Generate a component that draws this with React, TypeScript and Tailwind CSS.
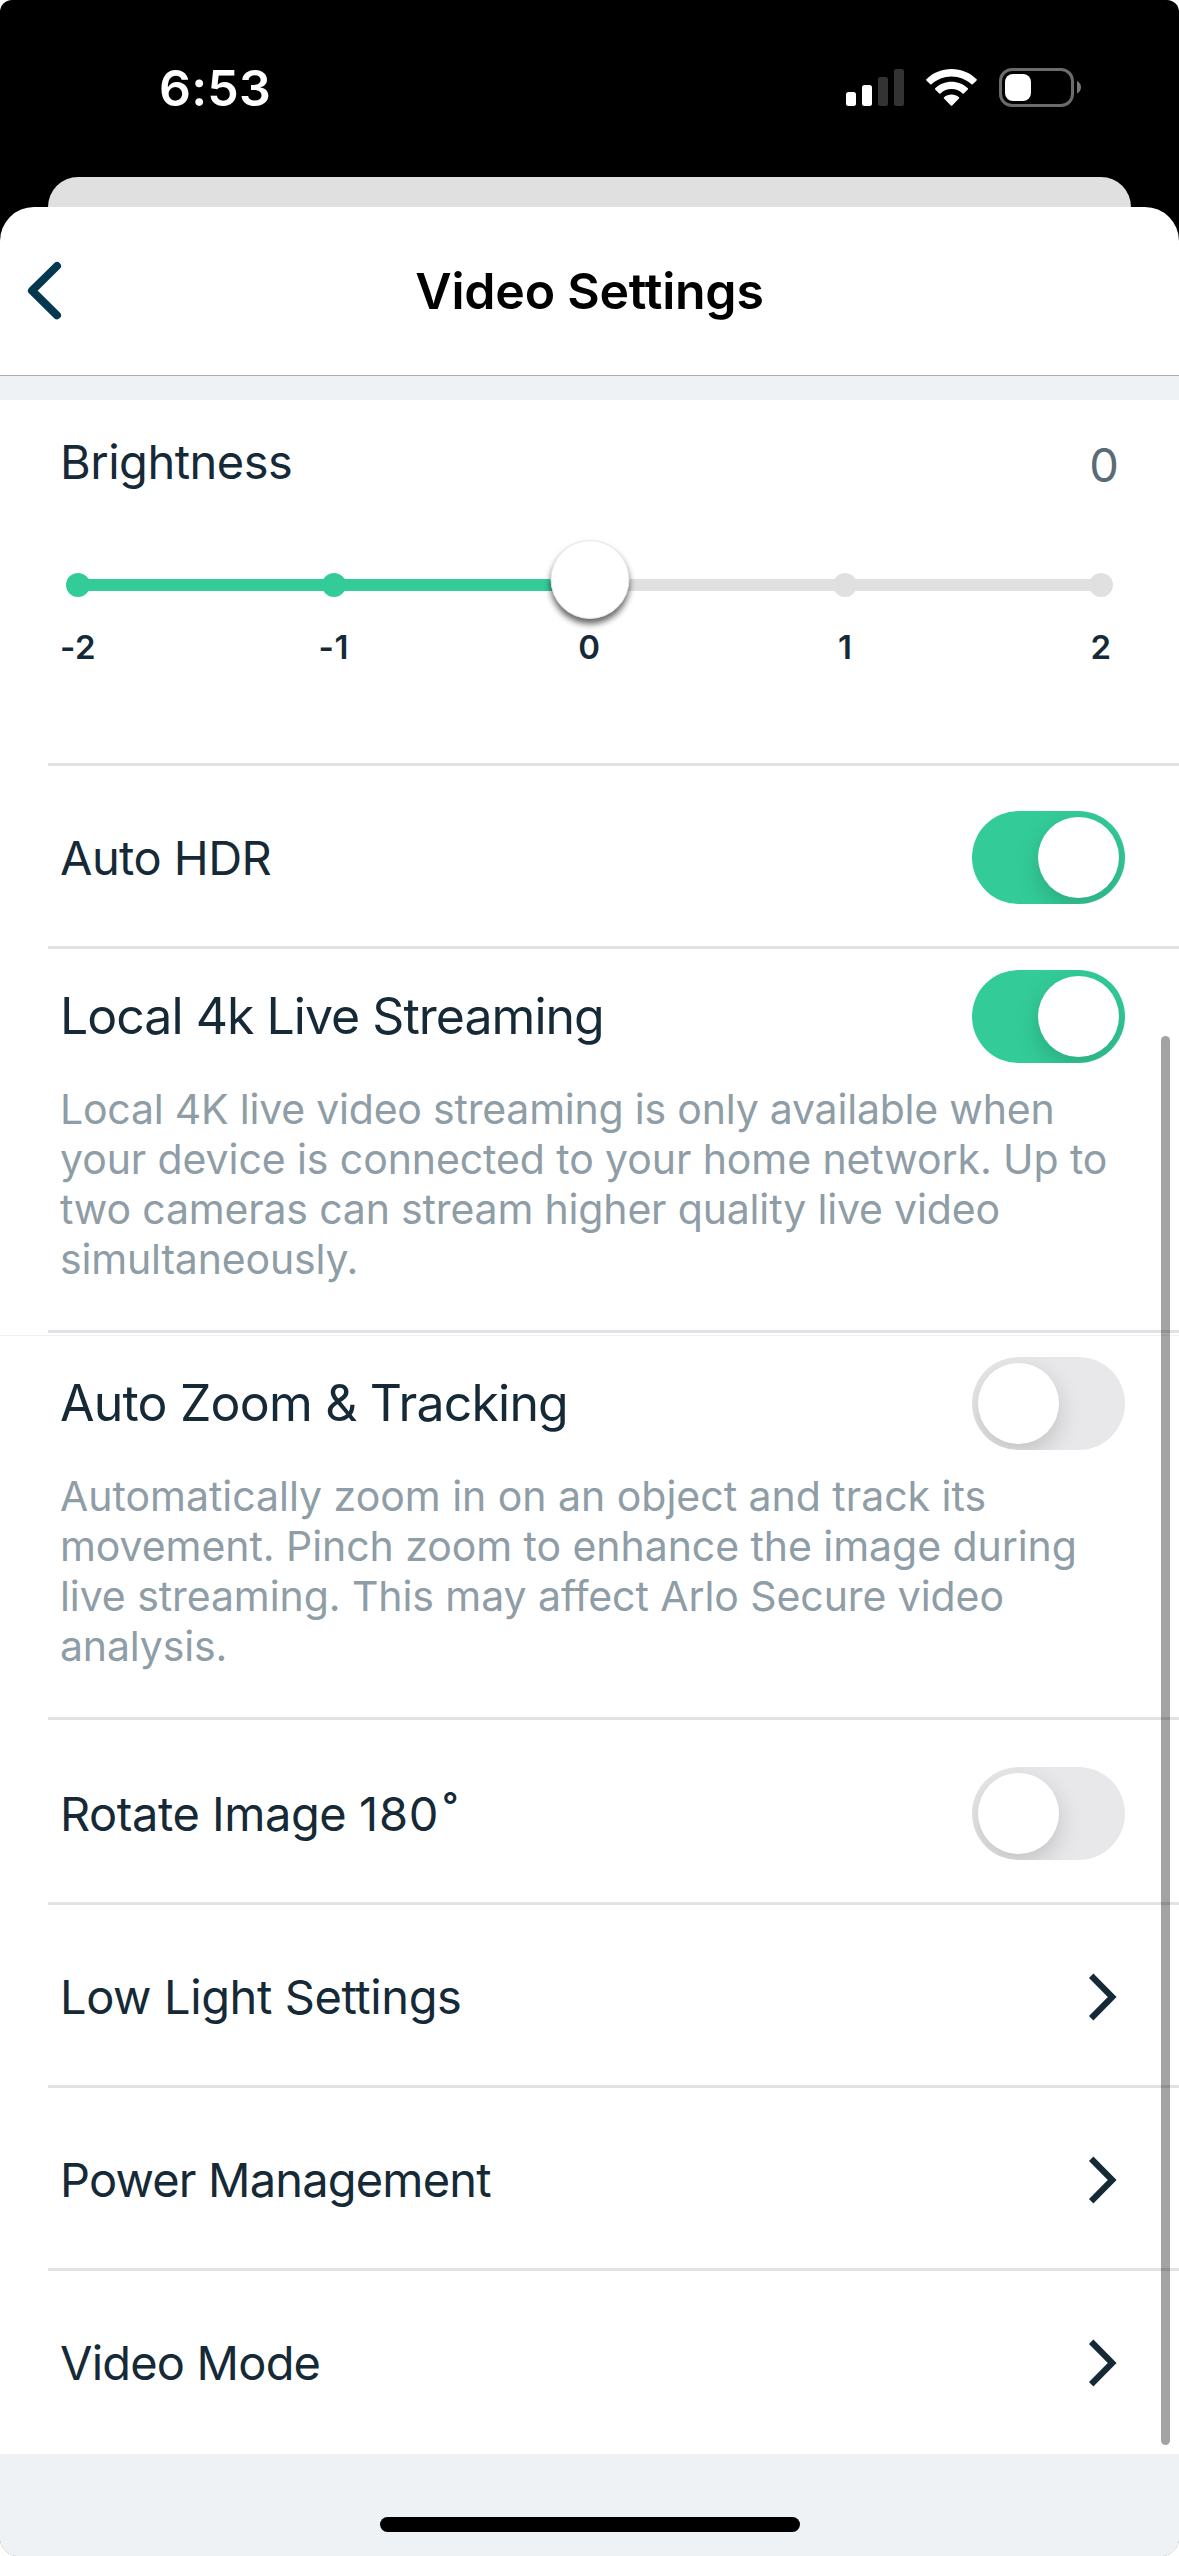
import type { ReactNode } from "react";

function StatusBar() {
  return (
    <div className="flex h-[177px] items-center justify-between pr-[98px] pb-px pl-[159px]">
      <span className="text-[50px] leading-[60px] font-semibold tracking-[0.2px] text-white">6:53</span>
      <div className="flex items-center">
        <svg width="58" height="40" viewBox="0 0 58 40" className="mr-[22px]">
          <rect x="0" y="24" width="10" height="14" rx="2.5" fill="#fff" />
          <rect x="16" y="17" width="10" height="21" rx="2.5" fill="#fff" />
          <rect x="32" y="9" width="10" height="29" rx="2.5" fill="#333" />
          <rect x="48" y="1" width="10" height="37" rx="2.5" fill="#333" />
        </svg>
        <svg width="51" height="40" viewBox="0 0 51 40" className="mr-[22px]" fill="#fff">
          <path d="M25.500 1C35 1 44 4.700 50.600 11.200Q51.200 11.800 50.600 12.400L46.700 16.300Q46.100 16.900 45.500 16.300C40 11.200 33 8.400 25.500 8.400S11 11.200 5.500 16.300Q4.900 16.900 4.300 16.300L.4 12.400Q-.2 11.800 .4 11.200C7 4.700 16 1 25.500 1Z" />
          <path d="M25.500 13.700C31.600 13.700 37.400 16 41.800 20.200Q42.400 20.800 41.800 21.400L37.800 25.400Q37.200 26 36.600 25.400C33.500 22.600 29.600 21.100 25.500 21.100S17.500 22.600 14.400 25.400Q13.800 26 13.200 25.400L9.200 21.400Q8.600 20.800 9.200 20.200C13.600 16 19.400 13.700 25.500 13.700Z" />
          <path d="M25.500 26.500C28.200 26.500 30.900 27.400 33 29.200Q33.600 29.800 33 30.400L26.200 37.400Q25.500 38.100 24.800 37.400L18 30.400Q17.400 29.800 18 29.200C20.100 27.400 22.800 26.500 25.500 26.500Z" />
        </svg>
        <svg width="82" height="40" viewBox="0 0 82 40">
          <rect x="1.500" y="1.500" width="72" height="36" rx="11.500" fill="none" stroke="#6b6b6b" strokeWidth="3" />
          <rect x="6" y="6" width="26" height="27" rx="8" fill="#fff" />
          <path d="M78 13C80.500 14 82 16.500 82 19.300S80.500 24.500 78 25.500Z" fill="#777" />
        </svg>
      </div>
    </div>
  );
}

function NavBar() {
  return (
    <header className="grid h-[169px] grid-cols-[1fr_auto_1fr] items-center border-b border-[#a9acaf]">
      <svg width="38" height="60" viewBox="0 0 38 60" className="ml-[25px]">
        <path d="M32 5L7 29.700L32 54.300" fill="none" stroke="#04384f" strokeWidth="8" strokeLinecap="round" strokeLinejoin="round" />
      </svg>
      <h1 className="text-[50px] leading-[60px] font-semibold tracking-[-0.23px] whitespace-nowrap text-black">
        Video Settings
      </h1>
    </header>
  );
}

function Toggle({ on }: { on: boolean }) {
  return (
    <div
      className={
        on
          ? "flex h-[93px] w-[153px] shrink-0 items-center justify-end overflow-hidden rounded-full bg-[#33cc99] px-[6px]"
          : "flex h-[93px] w-[153px] shrink-0 items-center overflow-hidden rounded-full bg-[#e8e8ea] px-[6px]"
      }
    >
      <div className="size-[81px] rounded-full bg-white shadow-[0_9px_24px_rgba(0,0,0,0.17)]" />
    </div>
  );
}

const stops = ["-2", "-1", "0", "1", "2"];

function Brightness() {
  return (
    <section className="h-[363px] bg-white">
      <div className="flex justify-between pt-[32px] pr-[60px] pl-[60px] text-[47px] leading-[60px]">
        <span className="tracking-[-0.5px] text-[#152a36]">Brightness</span>
        <span className="translate-y-[3px] text-[#5a6b78]">0</span>
      </div>
      <div className="relative mx-[66px] mt-[48px] h-[79px]">
        <div className="absolute inset-x-[12px] top-[39px] flex h-[12px] bg-[#e0e0e0]">
          <div className="w-1/2 bg-[#33cc99]" />
        </div>
        <div className="absolute inset-x-0 top-[33px] flex justify-between">
          <span className="size-[24px] rounded-full bg-[#33cc99]" />
          <span className="size-[24px] rounded-full bg-[#33cc99]" />
          <span className="size-[24px] rounded-full bg-[#33cc99]" />
          <span className="size-[24px] rounded-full bg-[#e0e0e0]" />
          <span className="size-[24px] rounded-full bg-[#e0e0e0]" />
        </div>
        <div className="absolute top-0 left-1/2 size-[79px] -translate-x-1/2 rounded-full border border-[#e6e6e6] bg-white shadow-[0_5px_6px_rgba(0,0,0,0.6)]" />
      </div>
      <div className="mx-[66px] mt-[8px] flex justify-between text-[33px] leading-[40px] font-semibold text-[#152a36]">
        {stops.map((stop) => (
          <span key={stop} className="flex w-[24px] justify-center tracking-[0.5px] whitespace-nowrap">
            {stop}
          </span>
        ))}
      </div>
    </section>
  );
}

function Divider() {
  return <div className="ml-[48px] h-[3px] bg-[#e0e2e5]" />;
}

function Row({ children }: { children: ReactNode }) {
  return (
    <div className="flex h-[180px] items-center justify-between bg-white pt-[4px] pr-[54px] pl-[60px] text-[47px] leading-[60px] text-[#152a36]">
      {children}
    </div>
  );
}

function ToggleRow({ on, children }: { on: boolean; children: ReactNode }) {
  return (
    <Row>
      {children}
      <div className="pb-[2px]">
        <Toggle on={on} />
      </div>
    </Row>
  );
}

function Chevron() {
  return (
    <svg width="32" height="50" viewBox="0 0 32 50" className="mr-[6px]">
      <path d="M4.200 3.800L25.200 25L4.200 46.200" fill="none" stroke="#152a36" strokeWidth="6.200" />
    </svg>
  );
}

function DetailRow({ title, on, children }: { title: ReactNode; on: boolean; children: ReactNode }) {
  return (
    <section className="bg-white pt-[21px] pr-[54px] pb-[46px] pl-[60px]">
      <div className="flex items-center justify-between text-[50px] leading-[60px] text-[#152a36]">
        <div className="pb-[2px]">{title}</div>
        <Toggle on={on} />
      </div>
      <div className="mt-[21px] text-[41px] leading-[50px] whitespace-nowrap text-[#8e9da6]">{children}</div>
    </section>
  );
}

export default function App() {
  return (
    <div className="h-[2556px] w-[1179px] overflow-hidden bg-white font-['Inter',sans-serif]">
      <div className="flex h-full flex-col overflow-hidden rounded-t-[12px] rounded-b-[18px] bg-black">
        <StatusBar />
        <div className="mx-[48px] h-[30px] rounded-t-[30px] bg-[#e0e0e0]" />
        <main className="relative flex-1 overflow-hidden rounded-t-[34px] bg-white">
          <NavBar />
          <div className="h-[24px] bg-[#eef2f5]" />
          <Brightness />
          <Divider />
          <ToggleRow on>
            <span className="tracking-[-0.55px]">Auto HDR</span>
          </ToggleRow>
          <Divider />
          <DetailRow on title={<span className="tracking-[-0.98px]">Local 4k Live Streaming</span>}>
            <p className="tracking-[-0.21px]">Local 4K live video streaming is only available when</p>
            <p className="tracking-[-0.09px]">your device is connected to your home network. Up to</p>
            <p className="tracking-[-0.17px]">two cameras can stream higher quality live video</p>
            <p className="tracking-[-0.17px]">simultaneously.</p>
          </DetailRow>
          <Divider />
          <div className="mt-[2px] h-px bg-[#eef2f5]" />
          <DetailRow on={false} title={<span className="tracking-[-0.81px]">Auto Zoom &amp; Tracking</span>}>
            <p className="tracking-[-0.02px]">Automatically zoom in on an object and track its</p>
            <p className="tracking-[-0.06px]">movement. Pinch zoom to enhance the image during</p>
            <p className="tracking-[-0.08px]">live streaming. This may affect Arlo Secure video</p>
            <p className="tracking-[-0.15px]">analysis.</p>
          </DetailRow>
          <Divider />
          <div className="pt-[2px]">
            <ToggleRow on={false}>
              <span className="tracking-[-0.45px]">
                Rotate Image <span className="tracking-[0.8px]">180</span>
                <span className="ml-[4px]">˚</span>
              </span>
            </ToggleRow>
          </div>
          <Divider />
          <Row>
            <span className="tracking-[-0.4px]">Low Light Settings</span>
            <Chevron />
          </Row>
          <Divider />
          <Row>
            <span className="tracking-[-0.83px]">Power Management</span>
            <Chevron />
          </Row>
          <Divider />
          <Row>
            <span className="tracking-[-0.8px]">Video Mode</span>
            <Chevron />
          </Row>
          <div className="mt-[3px] flex h-[102px] items-end justify-center bg-[#eef2f5] pb-[24px]">
            <div className="h-[15px] w-[420px] rounded-full bg-black" />
          </div>
          <div className="absolute top-[829px] right-[9px] h-[1409px] w-[9px] rounded-full bg-black/36" />
        </main>
      </div>
    </div>
  );
}
